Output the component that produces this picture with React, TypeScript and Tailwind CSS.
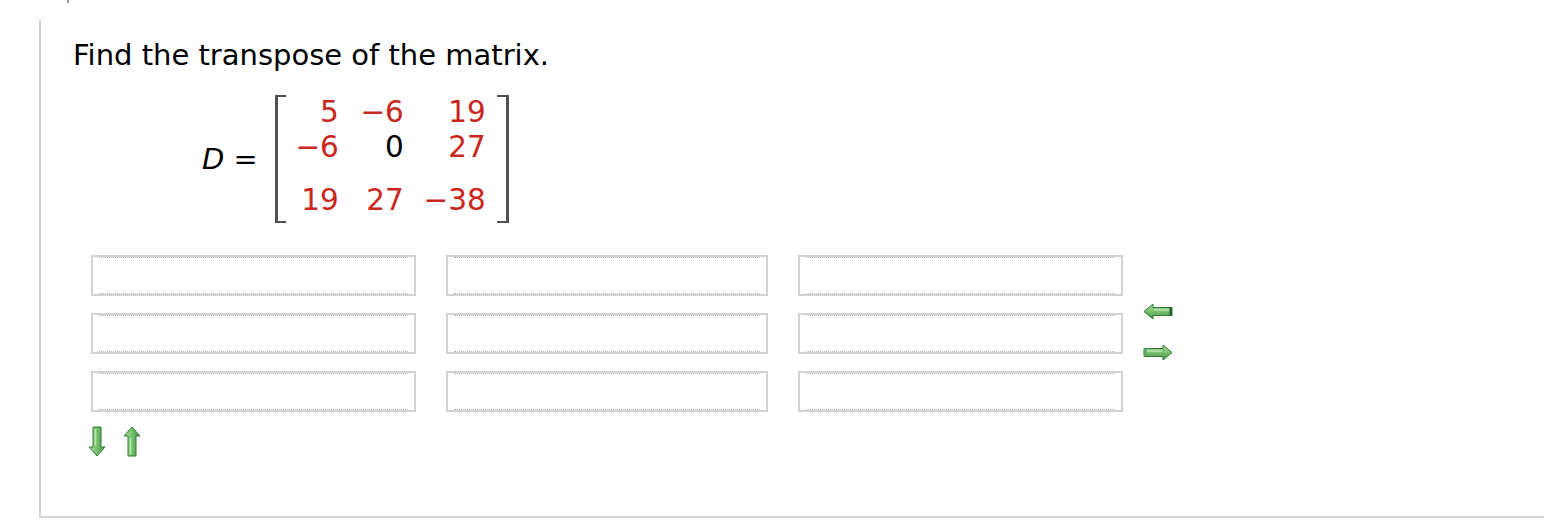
import React from "react";

const RED = "text-[#c9261d]";

function HArrow({ dir, id }: { dir: "left" | "right"; id: string }) {
  const flip = dir === "right";
  return (
    <svg width="30" height="17" viewBox="0 0 30 17" style={flip ? { transform: "scaleX(-1)" } : undefined}>
      <defs>
        <linearGradient id={id} x1="0" y1="0" x2="0" y2="1">
          <stop offset="0" stopColor="#a6dc9c" />
          <stop offset="0.5" stopColor="#79c06f" />
          <stop offset="1" stopColor="#3f923f" />
        </linearGradient>
      </defs>
      <path
        d="M1 8.5 L10 1 L10 4.5 L29 4.5 L29 12.5 L10 12.5 L10 16 Z"
        fill={`url(#${id})`}
        stroke="#2f7a2f"
        strokeWidth="1"
        strokeLinejoin="round"
      />
      <rect x="26.5" y="4.5" width="2.5" height="8" fill={flip ? "#5aa65a" : "#22602a"} />
      <path d="M11 7 L26 7" stroke="#c8ecc2" strokeWidth="1.4" opacity="0.85" />
    </svg>
  );
}

function VArrow({ dir, id }: { dir: "up" | "down"; id: string }) {
  const flip = dir === "up";
  return (
    <svg width="18" height="31" viewBox="0 0 18 31" style={flip ? { transform: "scaleY(-1)" } : undefined}>
      <defs>
        <linearGradient id={id} x1="0" y1="0" x2="1" y2="0">
          <stop offset="0" stopColor="#a6dc9c" />
          <stop offset="0.5" stopColor="#79c06f" />
          <stop offset="1" stopColor="#3f923f" />
        </linearGradient>
      </defs>
      <path
        d="M9 30 L1 21 L5 21 L5 1 L13 1 L13 21 L17 21 Z"
        fill={`url(#${id})`}
        stroke="#2f7a2f"
        strokeWidth="1"
        strokeLinejoin="round"
      />
      <path d="M7.5 3 L7.5 19" stroke="#c8ecc2" strokeWidth="1.4" opacity="0.85" />
    </svg>
  );
}

function InputBox({ w }: { w: string }) {
  return (
    <div className={`${w} h-[41px] border-2 border-[#d2d2d2] bg-white`}>
      <div className="mx-[6px] h-full border-y border-dotted border-[#b5b5b5]" />
    </div>
  );
}

function Cell({ v, w, black }: { v: string; w: string; black?: boolean }) {
  return <div className={`${w} text-right ${black ? "text-black" : RED}`}>{v}</div>;
}

export default function App() {
  const widths = ["w-[325px]", "w-[322px]", "w-[325px]"];
  return (
    <div className="min-h-[530px] w-[1544px] bg-white font-['DejaVu_Sans',sans-serif] text-black">
      <div className="ml-[67px] h-[3px] w-[2px] bg-[#9a9a9a]" />
      <div className="pt-[17px] pl-[39px]">
        <div className="h-[498px] border-l-2 border-b-2 border-[#d3d3d3] pl-[32px] pt-[18px]">
          <div className="text-[29px] leading-[34px]">Find the transpose of the matrix.</div>

          <div className="mt-[23px] flex items-center">
            <div className="ml-[129px] text-[29px] leading-[34px] whitespace-pre">
              <i>D</i> =
            </div>
            <div className="ml-[17px] flex items-stretch">
              <div className="h-[128px] w-[11px] border-l-[3px] border-y-2 border-[#505050]" />
              <div className="flex flex-col text-[29.5px] leading-[34px]">
                <div className="flex h-[35px]">
                  <Cell v="5" w="w-[53px]" />
                  <Cell v="−6" w="w-[65px]" />
                  <Cell v="19" w="w-[82px]" />
                </div>
                <div className="flex h-[35px]">
                  <Cell v="−6" w="w-[53px]" />
                  <Cell v="0" w="w-[65px]" black />
                  <Cell v="27" w="w-[82px]" />
                </div>
                <div className="mt-[18px] flex h-[34px]">
                  <Cell v="19" w="w-[53px]" />
                  <Cell v="27" w="w-[65px]" />
                  <Cell v="−38" w="w-[82px]" />
                </div>
              </div>
              <div className="ml-[11px] h-[128px] w-[12px] border-r-[3px] border-y-2 border-[#505050]" />
            </div>
          </div>

          <div className="mt-[32px] ml-[18px] flex items-center gap-[20px]">
            <div className="flex flex-col gap-[17px]">
              {[0, 1, 2].map((r) => (
                <div key={r} className="flex gap-[30px]">
                  {widths.map((w, c) => (
                    <InputBox key={c} w={w} />
                  ))}
                </div>
              ))}
            </div>
            <div className="flex flex-col gap-[24px] pb-[3px]">
              <HArrow dir="left" id="ga1" />
              <HArrow dir="right" id="ga2" />
            </div>
          </div>

          <div className="mt-[14px] ml-[15px] flex gap-[17px]">
            <VArrow dir="down" id="gv1" />
            <VArrow dir="up" id="gv2" />
          </div>
        </div>
      </div>
    </div>
  );
}
